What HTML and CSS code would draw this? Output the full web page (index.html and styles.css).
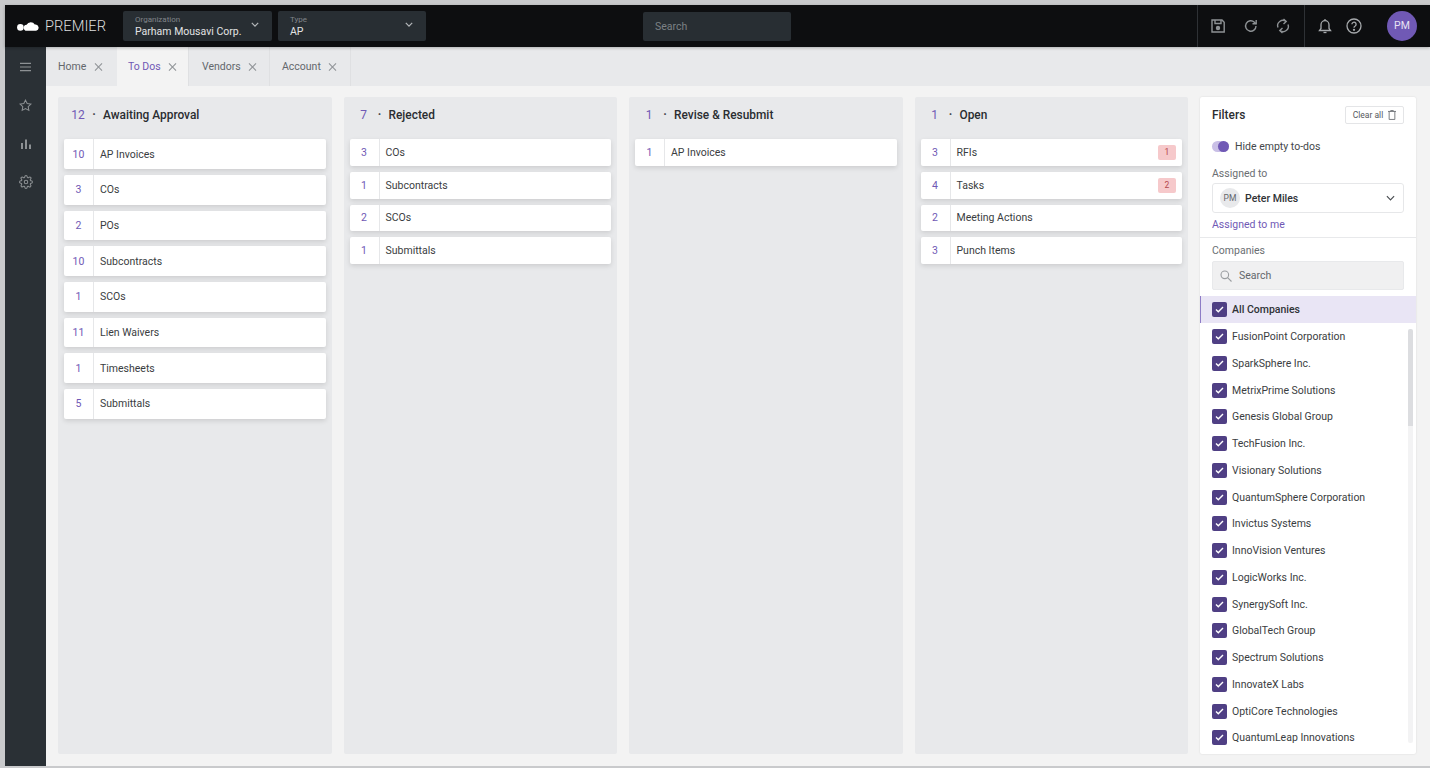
FILE: index.html
```html
<!DOCTYPE html>
<html lang="en">
<head>
<meta charset="utf-8">
<title>To Dos</title>
<link rel="stylesheet" href="styles.css">
</head>
<body>
<div class="app">
  <header class="topbar">
    <div class="logo">
      <svg class="logo-mark" width="22" height="11" viewBox="0 0 22 11"><circle cx="3.400" cy="7.400" r="3.300" fill="#fff"/><path d="M10 10.700a3 3 0 0 1-.4-6A4.600 4.600 0 0 1 17.800 4.600a3.100 3.100 0 0 1 1.300 6.100Z" fill="#fff"/></svg>
      <span class="logo-text">PREMIER</span>
    </div>
    <div class="select org">
      <div><div class="select-label">Organization</div><div class="select-value">Parham Mousavi Corp.</div></div>
      <svg class="chev" width="8" height="5" viewBox="0 0 10 6"><path d="M1 1l4 4 4-4" fill="none" stroke="#b5b8bb" stroke-width="1.500"/></svg>
    </div>
    <div class="select type">
      <div><div class="select-label">Type</div><div class="select-value">AP</div></div>
      <svg class="chev" width="8" height="5" viewBox="0 0 10 6"><path d="M1 1l4 4 4-4" fill="none" stroke="#b5b8bb" stroke-width="1.500"/></svg>
    </div>
    <div class="topsearch">Search</div>
    <div class="top-actions">
      <div class="group g1">
        <svg width="16" height="16" viewBox="0 0 16 16" fill="none" stroke="#8d9194" stroke-width="1.400"><path d="M2 2h10l2.200 2.200V14H2Z"/><path d="M5 2v3.500h6V2"/><circle cx="8" cy="10" r="1.500" fill="#8d9194"/></svg>
        <svg width="16" height="16" viewBox="0 0 16 16" fill="none" stroke="#8d9194" stroke-width="1.400"><path d="M13 8a5.200 5.200 0 1 1-1.600-3.800L13 5.700"/><path d="M13.200 2v3.800H9.500"/></svg>
        <svg width="16" height="16" viewBox="0 0 16 16" fill="none" stroke="#8d9194" stroke-width="1.400"><path d="M3 9.500A5.200 5.200 0 0 1 11 3.500"/><path d="M8.500 1l2.700 2.500L8.500 6"/><path d="M13 6.500A5.200 5.200 0 0 1 5 12.500"/><path d="M7.500 15l-2.700-2.500L7.500 10"/></svg>
      </div>
      <div class="group g2">
        <svg width="16" height="16" viewBox="0 0 16 16" fill="none" stroke="#a6a9ac" stroke-width="1.300"><path d="M2.500 12.500h11l-1.500-2V6.700a4 4 0 0 0-8 0v3.800Z"/><path d="M6.500 14.500h3"/><path d="M8 1v1.500"/></svg>
        <svg width="16" height="16" viewBox="0 0 16 16" fill="none" stroke="#a6a9ac" stroke-width="1.300"><circle cx="8" cy="8" r="7"/><path d="M5.900 6.200a2.100 2.100 0 1 1 3.300 1.800c-.8.500-1.200.9-1.200 1.800"/><circle cx="8" cy="11.800" r=".5" fill="#a6a9ac"/></svg>
      </div>
      <div class="avatar">PM</div>
    </div>
  </header>
  <div class="main">
    <nav class="side">
      <svg width="11" height="10" viewBox="0 0 12 10" fill="none" stroke="#8d9194" stroke-width="1.200"><path d="M0 1h12M0 5h12M0 9h12"/></svg>
      <svg width="13" height="13" viewBox="0 0 14 14" fill="none" stroke="#8d9194" stroke-width="1.100"><path d="M7 1.200l1.800 3.700 4 .6-2.900 2.800.7 4L7 10.400l-3.600 1.900.7-4L1.200 5.500l4-.6Z"/></svg>
      <svg width="12" height="12" viewBox="0 0 12 12" fill="#8d9194"><rect x="1" y="5" width="2" height="6"/><rect x="5" y="1.500" width="2" height="9.500"/><rect x="9" y="6.500" width="2" height="4.500"/></svg>
      <svg width="14" height="14" viewBox="0 0 24 24" fill="none" stroke="#8d9194" stroke-width="1.800"><circle cx="12" cy="12" r="3"/><path d="M19.400 15a1.700 1.700 0 0 0 .3 1.800l.1.100a2 2 0 1 1-2.900 2.900l-.1-.1a1.700 1.700 0 0 0-2.800 1.200V21a2 2 0 1 1-4 0v-.1a1.700 1.700 0 0 0-2.900-1.200l-.1.100a2 2 0 1 1-2.800-2.900l.1-.1a1.700 1.700 0 0 0-1.200-2.800H3a2 2 0 1 1 0-4h.1a1.700 1.700 0 0 0 1.200-2.900l-.1-.1A2 2 0 1 1 7 4.200l.1.1a1.700 1.700 0 0 0 1.800.3H9a1.700 1.700 0 0 0 1-1.500V3a2 2 0 1 1 4 0v.1a1.700 1.700 0 0 0 2.900 1.200l.1-.1a2 2 0 1 1 2.800 2.800l-.1.100a1.700 1.700 0 0 0-.3 1.800V9a1.700 1.700 0 0 0 1.500 1H21a2 2 0 1 1 0 4h-.1a1.700 1.700 0 0 0-1.500 1Z"/></svg>
    </nav>
    <div class="workspace">
      <div class="tabs">
        <div class="tab first">Home<span class="x"></span></div>
        <div class="tab active">To Dos<span class="x"></span></div>
        <div class="tab vendors">Vendors<span class="x"></span></div>
        <div class="tab account">Account<span class="x"></span></div>
      </div>
      <div class="board">
        <section class="col">
          <h2 class="col-head"><span class="col-count">12</span><span class="dot">·</span>Awaiting Approval</h2>
          <div class="rows tall">
            <div class="row"><span class="num">10</span><span class="name">AP Invoices</span></div>
            <div class="row"><span class="num">3</span><span class="name">COs</span></div>
            <div class="row"><span class="num">2</span><span class="name">POs</span></div>
            <div class="row"><span class="num">10</span><span class="name">Subcontracts</span></div>
            <div class="row"><span class="num">1</span><span class="name">SCOs</span></div>
            <div class="row"><span class="num">11</span><span class="name">Lien Waivers</span></div>
            <div class="row"><span class="num">1</span><span class="name">Timesheets</span></div>
            <div class="row"><span class="num">5</span><span class="name">Submittals</span></div>
          </div>
        </section>
        <section class="col">
          <h2 class="col-head"><span class="col-count">7</span><span class="dot">·</span>Rejected</h2>
          <div class="rows">
            <div class="row"><span class="num">3</span><span class="name">COs</span></div>
            <div class="row"><span class="num">1</span><span class="name">Subcontracts</span></div>
            <div class="row"><span class="num">2</span><span class="name">SCOs</span></div>
            <div class="row"><span class="num">1</span><span class="name">Submittals</span></div>
          </div>
        </section>
        <section class="col">
          <h2 class="col-head"><span class="col-count">1</span><span class="dot">·</span>Revise &amp; Resubmit</h2>
          <div class="rows">
            <div class="row"><span class="num">1</span><span class="name">AP Invoices</span></div>
          </div>
        </section>
        <section class="col">
          <h2 class="col-head"><span class="col-count">1</span><span class="dot">·</span>Open</h2>
          <div class="rows">
            <div class="row"><span class="num">3</span><span class="name">RFIs</span><span class="badge">1</span></div>
            <div class="row"><span class="num">4</span><span class="name">Tasks</span><span class="badge">2</span></div>
            <div class="row"><span class="num">2</span><span class="name">Meeting Actions</span></div>
            <div class="row"><span class="num">3</span><span class="name">Punch Items</span></div>
          </div>
        </section>
        <aside class="filters">
          <div class="f-head">
            <span class="f-title">Filters</span>
            <span class="clear">Clear all
              <svg width="8" height="10" viewBox="0 0 9 11" fill="none" stroke="#6b6f73" stroke-width="1"><path d="M0 1.500h9M3 1.500V.5h3v1M1.300 1.500v9h6.400v-9"/></svg>
            </span>
          </div>
          <div class="toggle-row"><span class="toggle"><span class="knob"></span></span>Hide empty to-dos</div>
          <div class="f-label">Assigned to</div>
          <div class="person">
            <span class="p-avatar">PM</span><span class="p-name">Peter Miles</span>
            <svg width="9" height="6" viewBox="0 0 10 6"><path d="M1 1l4 4 4-4" fill="none" stroke="#4a4e52" stroke-width="1.300"/></svg>
          </div>
          <div class="me">Assigned to me</div>
          <div class="f-label companies">Companies</div>
          <div class="f-search">
            <svg width="12" height="12" viewBox="0 0 12 12" fill="none" stroke="#9a9da0" stroke-width="1.100"><circle cx="4.800" cy="4.800" r="3.800"/><path d="M7.600 7.600L11.500 11.500"/></svg>
            Search
          </div>
          <div class="list">
            <div class="item all"><span class="check"><svg width="9" height="7" viewBox="0 0 9 7"><path d="M1 3.500L3.300 5.800 8 1" fill="none" stroke="#fff" stroke-width="1.400"/></svg></span>All Companies</div>
            <div class="scrollbar"></div>
            <div class="item"><span class="check"><svg width="9" height="7" viewBox="0 0 9 7"><path d="M1 3.500L3.300 5.800 8 1" fill="none" stroke="#fff" stroke-width="1.400"/></svg></span>FusionPoint Corporation</div>
            <div class="item"><span class="check"><svg width="9" height="7" viewBox="0 0 9 7"><path d="M1 3.500L3.300 5.800 8 1" fill="none" stroke="#fff" stroke-width="1.400"/></svg></span>SparkSphere Inc.</div>
            <div class="item"><span class="check"><svg width="9" height="7" viewBox="0 0 9 7"><path d="M1 3.500L3.300 5.800 8 1" fill="none" stroke="#fff" stroke-width="1.400"/></svg></span>MetrixPrime Solutions</div>
            <div class="item"><span class="check"><svg width="9" height="7" viewBox="0 0 9 7"><path d="M1 3.500L3.300 5.800 8 1" fill="none" stroke="#fff" stroke-width="1.400"/></svg></span>Genesis Global Group</div>
            <div class="item"><span class="check"><svg width="9" height="7" viewBox="0 0 9 7"><path d="M1 3.500L3.300 5.800 8 1" fill="none" stroke="#fff" stroke-width="1.400"/></svg></span>TechFusion Inc.</div>
            <div class="item"><span class="check"><svg width="9" height="7" viewBox="0 0 9 7"><path d="M1 3.500L3.300 5.800 8 1" fill="none" stroke="#fff" stroke-width="1.400"/></svg></span>Visionary Solutions</div>
            <div class="item"><span class="check"><svg width="9" height="7" viewBox="0 0 9 7"><path d="M1 3.500L3.300 5.800 8 1" fill="none" stroke="#fff" stroke-width="1.400"/></svg></span>QuantumSphere Corporation</div>
            <div class="item"><span class="check"><svg width="9" height="7" viewBox="0 0 9 7"><path d="M1 3.500L3.300 5.800 8 1" fill="none" stroke="#fff" stroke-width="1.400"/></svg></span>Invictus Systems</div>
            <div class="item"><span class="check"><svg width="9" height="7" viewBox="0 0 9 7"><path d="M1 3.500L3.300 5.800 8 1" fill="none" stroke="#fff" stroke-width="1.400"/></svg></span>InnoVision Ventures</div>
            <div class="item"><span class="check"><svg width="9" height="7" viewBox="0 0 9 7"><path d="M1 3.500L3.300 5.800 8 1" fill="none" stroke="#fff" stroke-width="1.400"/></svg></span>LogicWorks Inc.</div>
            <div class="item"><span class="check"><svg width="9" height="7" viewBox="0 0 9 7"><path d="M1 3.500L3.300 5.800 8 1" fill="none" stroke="#fff" stroke-width="1.400"/></svg></span>SynergySoft Inc.</div>
            <div class="item"><span class="check"><svg width="9" height="7" viewBox="0 0 9 7"><path d="M1 3.500L3.300 5.800 8 1" fill="none" stroke="#fff" stroke-width="1.400"/></svg></span>GlobalTech Group</div>
            <div class="item"><span class="check"><svg width="9" height="7" viewBox="0 0 9 7"><path d="M1 3.500L3.300 5.800 8 1" fill="none" stroke="#fff" stroke-width="1.400"/></svg></span>Spectrum Solutions</div>
            <div class="item"><span class="check"><svg width="9" height="7" viewBox="0 0 9 7"><path d="M1 3.500L3.300 5.800 8 1" fill="none" stroke="#fff" stroke-width="1.400"/></svg></span>InnovateX Labs</div>
            <div class="item"><span class="check"><svg width="9" height="7" viewBox="0 0 9 7"><path d="M1 3.500L3.300 5.800 8 1" fill="none" stroke="#fff" stroke-width="1.400"/></svg></span>OptiCore Technologies</div>
            <div class="item"><span class="check"><svg width="9" height="7" viewBox="0 0 9 7"><path d="M1 3.500L3.300 5.800 8 1" fill="none" stroke="#fff" stroke-width="1.400"/></svg></span>QuantumLeap Innovations</div>
          </div>
        </aside>
      </div>
    </div>
  </div>
</div>
</body>
</html>
```
FILE: styles.css
```css
* { box-sizing: border-box; }
html, body { margin: 0; height: 100%; overflow: hidden; }
body {
  background: #c9cacc;
  padding: 5px 0 2px 5px;
  font-family: Roboto, "Liberation Sans", sans-serif;
  color: #2f3236;
  font-size: 10.5px;
}
.app { height: 761px; display: flex; flex-direction: column; background: #f3f3f3; }
.topbar {
  height: 42px;
  flex: none;
  background: #0d0e10;
  display: flex;
  align-items: center;
  position: relative;
  box-shadow: 0 1px 3px rgba(0,0,0,.25);
}
.logo { width: 118px; padding-left: 12px; display: flex; align-items: center; gap: 6px; flex: none; }
.logo-mark { flex: none; margin-top: -1px; }
.logo-text { color: #dddedf; font-size: 14.700px; font-weight: 300; }
.select {
  height: 30px;
  background: #282e33;
  border-radius: 2px;
  display: flex;
  align-items: center;
  justify-content: space-between;
  padding: 0 13px 0 12px;
  color: #e2e3e4;
  flex: none;
}
.org { width: 149px; margin-right: 6px; }
.type { width: 148px; }
.select-label { font-size: 8px; line-height: 9px; color: #80858a; margin-top: 1px; }
.select-value { font-size: 10.5px; line-height: 13px; margin-top: 1px; }
.chev { margin-top: -3px; }
.topsearch {
  position: absolute;
  left: 638px;
  top: 7px;
  width: 148px;
  height: 29px;
  background: #282e33;
  border-radius: 2px;
  color: #7c8185;
  font-size: 10.5px;
  line-height: 29px;
  padding-left: 12px;
}
.top-actions { margin-left: auto; display: flex; align-items: center; height: 100%; }
.group { height: 100%; display: flex; align-items: center; border-left: 1px solid #2e3135; flex: none; }
.g1 { width: 107px; padding-left: 12px; gap: 16.500px; }
.g2 { width: 83px; padding-left: 12px; gap: 13px; }
.avatar {
  width: 30px; height: 30px; border-radius: 50%;
  background: #7059b5; color: #e6e2f3;
  font-size: 10.5px; line-height: 30px; text-align: center;
  margin-right: 13px;
  flex: none;
}
.main { flex: 1; display: flex; min-height: 0; }
.side {
  width: 41px;
  flex: none;
  background: #2a3035;
  display: flex;
  flex-direction: column;
  align-items: center;
  padding-top: 15px;
}
.side svg:nth-child(2) { margin-top: 27px; }
.side svg:nth-child(3) { margin-top: 26px; }
.side svg:nth-child(4) { margin-top: 25px; }
.workspace { flex: 1; min-width: 0; display: flex; flex-direction: column; }
.tabs { height: 39px; flex: none; background: #e8e9eb; display: flex; }
.tab {
  display: flex;
  align-items: center;
  color: #63676c;
  padding: 0 0 0 12px;
  border-right: 1px solid #dfe0e2;
  font-size: 10.5px;
  flex: none;
  width: 71px;
}
.tab.first { border-right: 0; width: 71px; }
.tab.active { background: #f3f3f3; color: #7059b5; width: 72px; padding-left: 11px; }
.tab.vendors { width: 81px; padding-left: 13px; }
.tab.account { width: 81px; padding-left: 12px; }
.x { width: 8px; height: 8px; margin-left: 8px; position: relative; flex: none; }
.x::before, .x::after {
  content: "";
  position: absolute;
  left: 3.500px; top: -1px;
  width: 1px; height: 10px;
  background: #8e9296;
}
.x::before { transform: rotate(45deg); }
.x::after { transform: rotate(-45deg); }
.board { flex: 1; min-height: 0; display: flex; gap: 12px; padding: 11px 14px 12px 12px; }
.col { width: 273.500px; flex: none; background: #e8e9eb; border-radius: 2px; padding: 0 6px; }
.col-head {
  margin: 0;
  height: 42.300px;
  padding: 0 0 6px 7px;
  display: flex;
  align-items: center;
  font-size: 11.900px;
  font-weight: 500;
  color: #2a2d31;
}
.col-count { color: #7059b5; font-weight: 400; font-size: 12px; width: 14px; text-align: center; }
.col-head .dot { width: 18px; text-align: center; color: #44474b; font-weight: 700; }
.rows { display: flex; flex-direction: column; gap: 6px; }
.row {
  height: 26.670px;
  background: #fff;
  border-radius: 2px;
  display: flex;
  align-items: center;
  box-shadow: 0 2px 5px rgba(0,0,0,.12);
}
.rows.tall .row { height: 29.700px; }
.num {
  width: 30px;
  align-self: stretch;
  border-right: 1px solid #e6e7e9;
  color: #7059b5;
  display: flex;
  align-items: center;
  justify-content: center;
  flex: none;
}
.name { flex: 1; padding-left: 6px; color: #3a3d41; }
.badge {
  width: 18px; height: 15px;
  background: #f6c9cb;
  color: #b4474d;
  border-radius: 2px;
  font-size: 8.500px;
  line-height: 15px;
  text-align: center;
  margin-right: 6px;
}
.filters {
  flex: none;
  width: 216px;
  background: #fff;
  border-radius: 2px;
  box-shadow: 0 0 2px rgba(0,0,0,.12);
  overflow: hidden;
  display: flex;
  flex-direction: column;
}
.f-head { height: 36px; display: flex; align-items: center; justify-content: space-between; padding: 0 12px; flex: none; }
.f-title { font-size: 11.900px; font-weight: 500; color: #2a2d31; }
.clear {
  height: 18px; width: 59px;
  border: 1px solid #e4e5e7;
  border-radius: 2px;
  display: flex;
  align-items: center;
  justify-content: center;
  gap: 5px;
  font-size: 8.500px;
  color: #55595d;
}
.toggle-row { height: 17px; margin-top: 5px; display: flex; align-items: center; padding-left: 12px; color: #44474b; flex: none; }
.toggle { width: 17px; height: 11px; background: #c9bfe6; border-radius: 6px; position: relative; margin-right: 6px; }
.knob { position: absolute; right: 0; top: 0; width: 11px; height: 11px; border-radius: 50%; background: #7059b5; }
.f-label { color: #6a6e72; margin: 12px 12px 0; line-height: 13px; flex: none; }
.person {
  margin: 3px 12px 0;
  height: 30px;
  border: 1px solid #e6e7e9;
  border-radius: 3px;
  display: flex;
  align-items: center;
  padding: 0 8px 0 7px;
  flex: none;
}
.p-avatar { width: 20px; height: 20px; border-radius: 50%; background: #e8e9eb; color: #63676c; font-size: 8.500px; line-height: 20px; text-align: center; margin-right: 5px; }
.p-name { flex: 1; font-weight: 500; color: #2f3236; }
.me { color: #7059b5; margin: 5px 12px 0; line-height: 13px; height: 19px; flex: none; }
.f-label.companies { margin: 0; padding: 6px 12px 0; border-top: 1px solid #e8e9eb; height: 21px; line-height: 13px; }
.f-search {
  margin: 3px 12px 0;
  height: 29px;
  background: #f0f0f1;
  border: 1px solid #e8e9eb;
  border-radius: 2px;
  display: flex;
  align-items: center;
  padding-left: 7px;
  gap: 7px;
  color: #63676c;
  flex: none;
}
.list { margin-top: 6px; padding-top: .4px; position: relative; flex: 1; overflow: hidden; }
.item {
  height: 26.750px;
  display: flex;
  align-items: center;
  padding-left: 12px;
  color: #3a3d41;
}
.item.all {
  background: #e9e5f5;
  border-left: 1px solid #8e7cc7;
  padding-left: 11px;
  font-weight: 500;
  color: #2f3236;
}
.check {
  width: 15px; height: 15px;
  background: #4f3f84;
  border-radius: 2px;
  display: flex;
  align-items: center;
  justify-content: center;
  margin-right: 5px;
  flex: none;
}
.scrollbar {
  position: absolute;
  right: 3px;
  top: 33px;
  bottom: 11px;
  width: 5px;
  background: linear-gradient(#dcdde0 0 97px, #f3f3f4 97px);
  border-radius: 2px;
}
```
